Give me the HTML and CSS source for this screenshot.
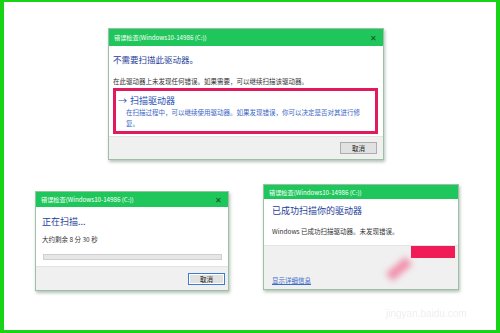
FILE: index.html
```html
<!DOCTYPE html>
<html lang="zh-CN">
<head>
<meta charset="utf-8">
<title>错误检查</title>
<link rel="stylesheet" href="styles.css">
</head>
<body>
<div class="frame">
  <div class="win win-top">
    <div class="titlebar"><span class="title">错误检查(Windows10-14986 (C:))</span><span class="close">✕</span></div>
    <div class="body body-top">
      <div class="heading">不需要扫描此驱动器。</div>
      <div class="text">在此驱动器上未发现任何错误。如果需要，可以继续扫描该驱动器。</div>
      <div class="highlight">
        <div class="opt-title"><span class="arrow">→</span>扫描驱动器</div>
        <div class="opt-text">在扫描过程中，可以继续使用驱动器。如果发现错误，你可以决定是否对其进行修复。</div>
      </div>
    </div>
    <div class="footer footer-top"><span class="btn">取消</span></div>
  </div>

  <div class="win win-left">
    <div class="titlebar tb-small"><span class="title">错误检查(Windows10-14986 (C:))</span><span class="close">✕</span></div>
    <div class="body body-left">
      <div class="heading">正在扫描...</div>
      <div class="text">大约剩余 8 分 30 秒</div>
      <div class="progress"></div>
    </div>
    <div class="footer footer-left"><span class="btn btn-focus">取消</span></div>
  </div>

  <div class="win win-right">
    <div class="titlebar tb-small"><span class="title">错误检查(Windows10-14986 (C:))</span></div>
    <div class="body body-right">
      <div class="heading">已成功扫描你的驱动器</div>
      <div class="text">Windows 已成功扫描驱动器。未发现错误。</div>
    </div>
    <div class="footer footer-right">
      <span class="pinkbtn"></span>
      <span class="link">显示详细信息</span>
    </div>
  </div>

  <div class="wm-arrow"></div>
  <div class="watermark">jingyan.baidu.com</div>
</div>
</body>
</html>
```
FILE: styles.css
```css
* { box-sizing: border-box; }
html, body { margin: 0; padding: 0; }
body {
  width: 500px;
  height: 333px;
  overflow: hidden;
  background: #fff;
  font-family: "Noto Sans CJK SC", "Noto Sans", sans-serif;
}
.frame {
  position: relative;
  width: 500px;
  height: 333px;
  border-style: solid;
  border-color: #17d417;
  border-width: 2px 4px 3px 4px;
  background: #fff;
}
.win {
  position: absolute;
  display: flex;
  flex-direction: column;
  background: #fff;
  border: 1px solid #9dbfa5;
  box-shadow: 1px 2px 3px rgba(90, 120, 100, 0.45);
}
.win-top { left: 104px; top: 26px; width: 276px; height: 132px; }
.win-left { left: 31px; top: 189px; width: 194px; height: 100px; }
.win-right { left: 259px; top: 182px; width: 196px; height: 106px; }

.titlebar {
  height: 17px;
  flex: none;
  background: #1fc65b;
  display: flex;
  align-items: center;
  justify-content: space-between;
  padding: 0 6px 0 5px;
  color: #fff;
  font-size: 6.2px;
}
.tb-small { height: 15px; }
.win-right .tb-small { height: 14px; }
.close { color: #0d4f24; font-size: 7.5px; }

.body { flex: 1; display: flex; flex-direction: column; }
.heading { color: #1e3e9a; font-size: 8.5px; line-height: 14px; }
.text { color: #333; font-size: 6.5px; line-height: 10px; }

.body-top { padding: 6px 5px 0 4px; }
.body-top .text { margin-top: 10px; }
.highlight {
  margin-top: 2px;
  height: 46px;
  border: 3px solid #e01a5c;
  padding: 4px 6px 0 2px;
}
.opt-title { color: #1f4fb5; font-size: 9px; line-height: 12px; }
.arrow { margin-right: 3px; }
.opt-text {
  color: #3a66c4;
  font-size: 6.5px;
  line-height: 11px;
  padding-left: 8px;
}
.footer {
  flex: none;
  background: #f0f0f0;
  border-top: 1px solid #e4e4e4;
  display: flex;
  align-items: center;
  justify-content: flex-end;
}
.footer-top { height: 23px; padding-right: 6px; }
.btn {
  width: 37px;
  height: 12px;
  border: 1px solid #adadad;
  background: #e1e1e1;
  color: #222;
  font-size: 6.5px;
  display: flex;
  align-items: center;
  justify-content: center;
}
.btn-focus { border: 1px solid #3b7bd2; box-shadow: inset 0 0 0 1px #fff; }

.body-left { padding: 8px 6px 0 6px; }
.body-left .heading { font-size: 9px; }
.body-left .text { margin-top: 5px; }
.progress {
  margin: 10px 0 0 1px;
  height: 6px;
  background: #e6e6e6;
  border: 1px solid #cfcfcf;
}
.footer-left { height: 24px; padding-right: 3px; }

.body-right { padding: 5px 6px 0 8px; }
.body-right .heading { font-size: 9px; }
.body-right .text { margin-top: 8px; }
.footer-right {
  position: relative;
  height: 44px;
  flex-direction: column;
  align-items: flex-start;
  justify-content: flex-end;
  padding: 0 0 4px 8px;
}
.pinkbtn {
  position: absolute;
  right: 3px;
  top: 0;
  width: 44px;
  height: 12px;
  background: #ef1c58;
}
.link {
  color: #3a6cc8;
  font-size: 6.5px;
  text-decoration: underline;
  line-height: 10px;
}
.wm-arrow {
  position: absolute;
  left: 382px;
  top: 262px;
  width: 26px;
  height: 10px;
  background: #f07a9c;
  transform: rotate(-40deg);
  filter: blur(3px);
  opacity: 0.8;
}
.watermark {
  position: absolute;
  left: 382px;
  top: 306px;
  color: #efefef;
  font-family: "Liberation Sans", sans-serif;
  font-size: 10px;
  filter: blur(0.6px);
}
```
